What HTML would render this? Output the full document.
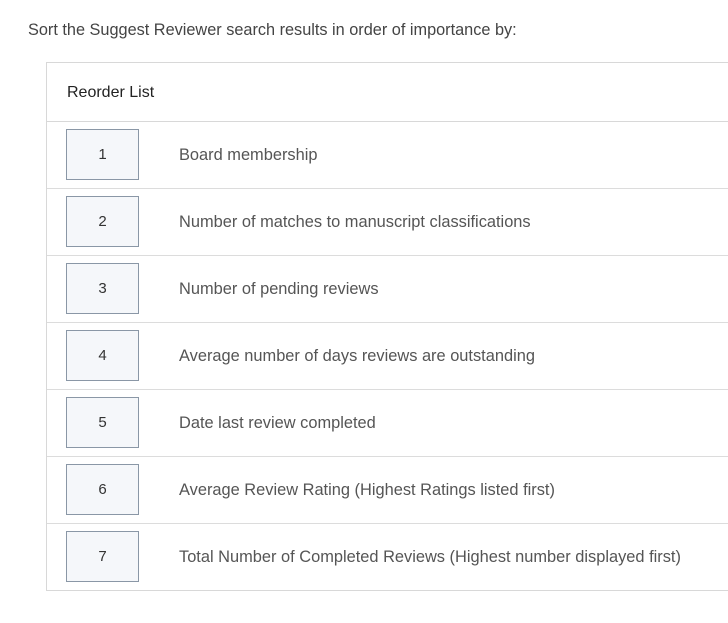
<!DOCTYPE html>
<html><head><style>
body{margin:0;background:#fff;font-family:"Liberation Sans",sans-serif;width:728px;height:623px;overflow:hidden;position:relative}
.t{position:absolute;left:28px;top:21px;font-size:16.3px;color:#444}
.tbl{position:absolute;left:46px;top:62px;width:720px;border:1px solid #d8d8d8;border-right:none}
.h{height:58px;border-bottom:1px solid #d8d8d8;font-size:16px;color:#222;line-height:60px;padding-left:20px}
.r{height:66px;border-bottom:1px solid #dcdcdc;position:relative}
.r:last-child{border-bottom:none}
.b{position:absolute;left:19px;top:7px;width:71px;height:49px;border:1px solid #8a97a6;background:#f5f7fa;text-align:center;line-height:49px;font-size:15px;color:#333}
.l{position:absolute;left:132px;top:0;line-height:66px;font-size:16.4px;color:#555}
</style></head><body>
<div class="t">Sort the Suggest Reviewer search results in order of importance by:</div>
<div class="tbl">
<div class="h">Reorder List</div>
<div class="r"><div class="b">1</div><div class="l">Board membership</div></div>
<div class="r"><div class="b">2</div><div class="l">Number of matches to manuscript classifications</div></div>
<div class="r"><div class="b">3</div><div class="l">Number of pending reviews</div></div>
<div class="r"><div class="b">4</div><div class="l">Average number of days reviews are outstanding</div></div>
<div class="r"><div class="b">5</div><div class="l">Date last review completed</div></div>
<div class="r"><div class="b">6</div><div class="l">Average Review Rating (Highest Ratings listed first)</div></div>
<div class="r"><div class="b">7</div><div class="l">Total Number of Completed Reviews (Highest number displayed first)</div></div>
</div>
</body></html>
